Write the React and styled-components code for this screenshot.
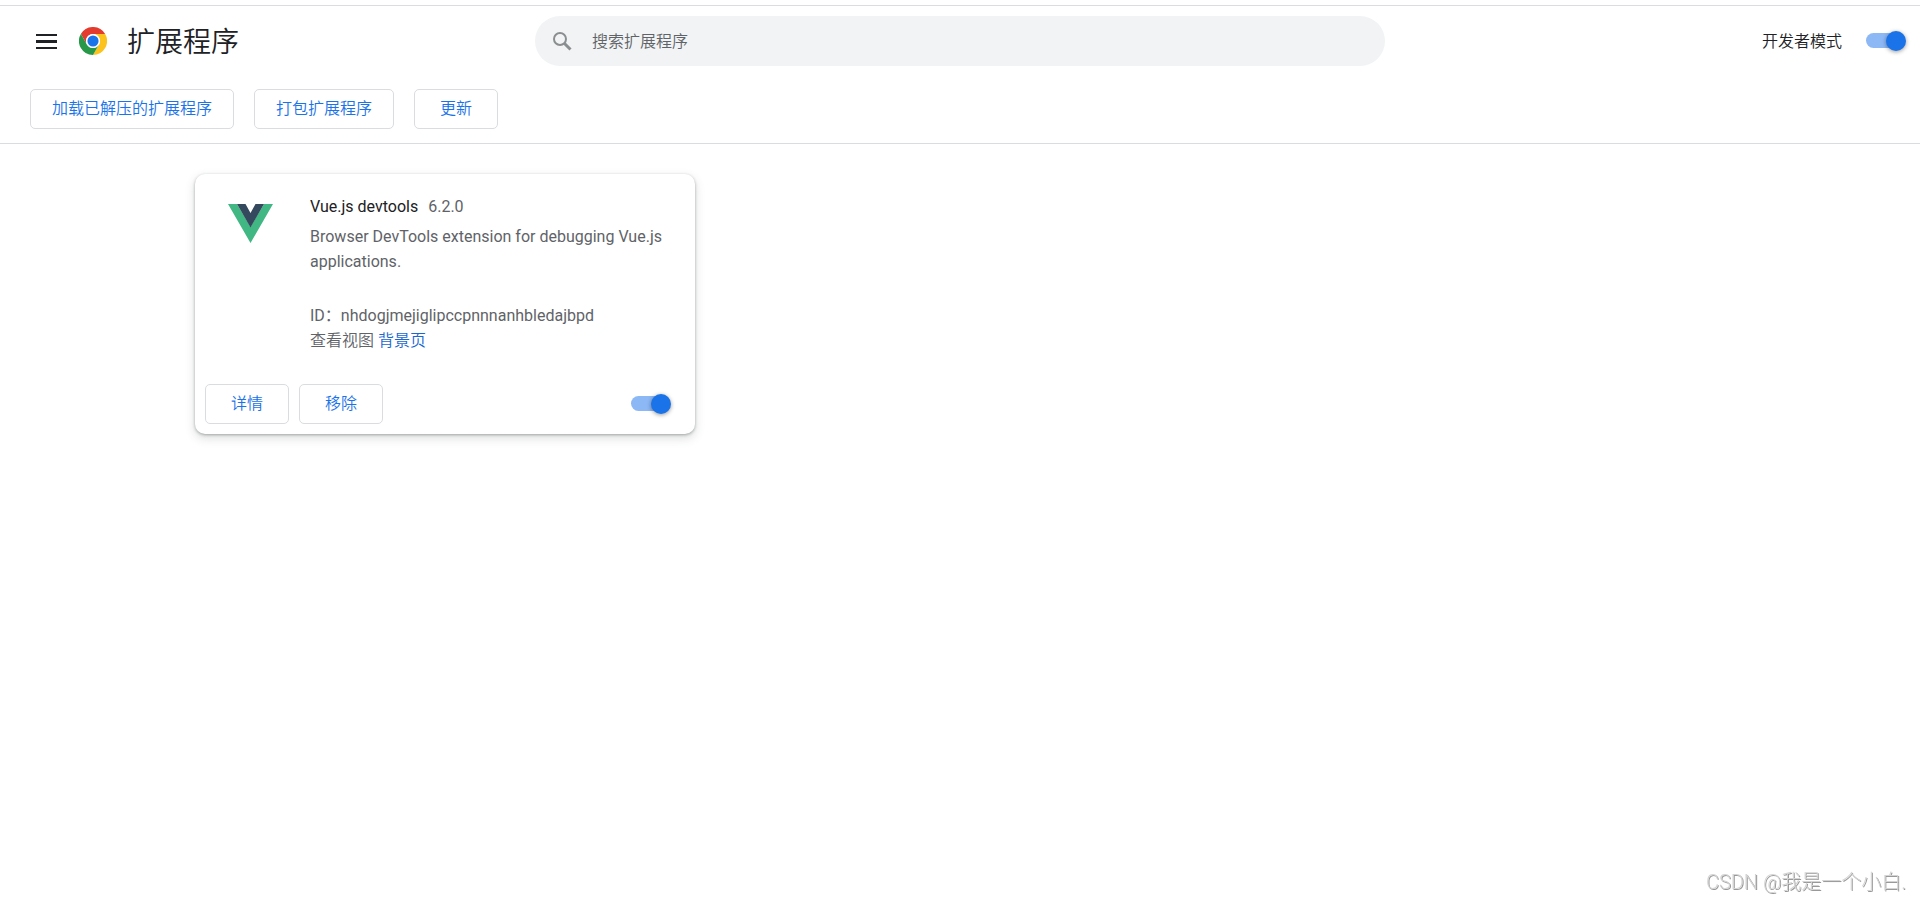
import React from "react";
import styled, { createGlobalStyle } from "styled-components";

const GlobalStyle = createGlobalStyle`
  *, *::before, *::after { box-sizing: border-box; }
  body {
    margin: 0;
    background: #fff;
    color: #202124;
    font: 350 16px/25px Roboto, "Noto Sans CJK SC", sans-serif;
  }
  button, input { font: inherit; }
`;

const Page = styled.div`
  padding-top: 5px;
`;

const Header = styled.header`
  display: grid;
  grid-template-columns: minmax(max-content, 1fr) minmax(0, 850px) minmax(max-content, 1fr);
  align-items: center;
  height: 71px;
  border-top: 1px solid #dadce0;
`;

const Brand = styled.div`
  display: flex;
  align-items: center;
  padding-left: 31px;
`;

const MenuButton = styled.button`
  display: flex;
  padding: 0;
  border: 0;
  background: none;
  color: #202124;
  cursor: pointer;
`;

const Logo = styled.svg`
  width: 28px;
  height: 28px;
  margin: 0 20px 0 17px;
`;

const Title = styled.h1`
  margin: 0;
  padding-top: 4px;
  font-size: 28px;
  line-height: 40px;
  font-weight: 350;
`;

const SearchBox = styled.label`
  display: flex;
  align-items: center;
  gap: 18px;
  height: 50px;
  padding: 0 16px;
  border-radius: 25px;
  background: #f1f3f4;
  color: #8b8e91;
`;

const SearchInput = styled.input`
  flex: 1;
  min-width: 0;
  padding: 0;
  border: 0;
  outline: 0;
  background: none;
  color: #202124;
  &::placeholder { color: #5f6368; opacity: 1; }
`;

const DevMode = styled.label`
  display: flex;
  align-items: center;
  justify-self: end;
  gap: 24px;
  padding-right: 14px;
`;

const Toggle = styled.input.attrs({ type: "checkbox", role: "switch" })`
  appearance: none;
  position: relative;
  width: 40px;
  height: 20px;
  margin: 0;
  cursor: pointer;

  &::before {
    content: "";
    position: absolute;
    inset: 2px 5px 3px 0;
    border-radius: 8px;
    background: #bdc1c6;
  }
  &::after {
    content: "";
    position: absolute;
    top: 0;
    left: 0;
    width: 20px;
    height: 20px;
    border-radius: 50%;
    background: #fff;
    box-shadow: 0 1px 4px rgba(0, 0, 0, 0.4);
  }
  &:checked::before { background: #8cb8f5; }
  &:checked::after { left: 20px; background: #1a73e8; }
`;

const Toolbar = styled.div`
  display: flex;
  gap: 20px;
  padding: 13px 30px 14px;
  border-bottom: 1px solid #dadce0;
`;

const Button = styled.button`
  min-width: 84px;
  height: 40px;
  padding: 0 21px;
  border: 1px solid #dadce0;
  border-radius: 5px;
  background: #fff;
  color: #1a73e8;
  line-height: 24px;
  cursor: pointer;
`;

const CardGrid = styled.main`
  display: grid;
  grid-template-columns: repeat(auto-fill, 500px);
  gap: 15px;
  max-width: 1530px;
  margin: 30px auto;
`;

const Card = styled.article`
  display: flex;
  flex-direction: column;
  min-height: 260px;
  border-radius: 10px;
  background: #fff;
  box-shadow: 0 1px 3px rgba(60, 64, 67, 0.4), 0 4px 10px 1px rgba(60, 64, 67, 0.15);
`;

const CardBody = styled.div`
  display: flex;
  flex: 1;
  gap: 37px;
  padding: 20px 25px 0 33px;
`;

const VueLogo = styled.svg`
  flex: none;
  width: 45px;
  height: 39px;
  margin-top: 10px;
`;

const Info = styled.div`
  font-weight: 400;
  color: #5f6368;
`;

const NameRow = styled.div`
  display: flex;
  gap: 10px;
  margin-bottom: 5px;
`;

const Name = styled.h2`
  margin: 0;
  font-size: 16px;
  font-weight: 400;
  color: #202124;
`;

const Text = styled.p`
  margin: 0;
`;

const Details = styled.div`
  margin-top: 29px;
`;

const Chinese = styled.span`
  font-weight: 350;
`;

const Link = styled.a`
  font-weight: 350;
  color: #1967d2;
  text-decoration: none;
`;

const CardActions = styled.div`
  display: flex;
  align-items: center;
  gap: 10px;
  padding: 0 24px 10px 10px;

  ${Toggle} { margin-left: auto; }
`;

const Watermark = styled.div`
  position: fixed;
  right: 14px;
  bottom: 5px;
  font-size: 20px;
  font-weight: 300;
  line-height: 30px;
  color: #d4d4d4;
  text-shadow: 1px 1px 0 #999;
`;

export default function App() {
  return (
    <Page>
      <GlobalStyle />
      <Header>
        <Brand>
          <MenuButton aria-label="主菜单">
            <svg width="31" height="30" viewBox="0 0 31 30" fill="currentColor">
              <path d="M5 8h21v2H5zM5 14h21v3H5zM5 21h21v2H5z" />
            </svg>
          </MenuButton>
          <Logo viewBox="0 0 48 48" aria-hidden="true">
            <path fill="#e33b2e" d="M3.2 12A24 24 0 0 1 44.8 12H24A12 12 0 0 0 13.6 30Z" />
            <path fill="#fcc31e" d="M44.8 12A24 24 0 0 1 24 48L34.4 30A12 12 0 0 0 24 12Z" />
            <path fill="#269847" d="M24 48A24 24 0 0 1 3.2 12L13.6 30A12 12 0 0 0 34.4 30Z" />
            <circle cx="24" cy="24" r="12" fill="#fff" />
            <circle cx="24" cy="24" r="9.5" fill="#1a73e8" />
          </Logo>
          <Title>扩展程序</Title>
        </Brand>
        <SearchBox>
          <svg width="23" height="23" viewBox="0 0 23 23" fill="none" stroke="currentColor" strokeWidth="2">
            <circle cx="9" cy="9" r="6" />
            <path strokeWidth="3" d="M13.5 13.5l6 6" />
          </svg>
          <SearchInput placeholder="搜索扩展程序" aria-label="搜索扩展程序" />
        </SearchBox>
        <DevMode>
          开发者模式
          <Toggle defaultChecked />
        </DevMode>
      </Header>
      <Toolbar>
        <Button>加载已解压的扩展程序</Button>
        <Button>打包扩展程序</Button>
        <Button>更新</Button>
      </Toolbar>
      <CardGrid>
        <Card>
          <CardBody>
            <VueLogo viewBox="0 0 45 39" aria-hidden="true">
              <path fill="#41b883" d="M0 0h9l13.500 23L36 0h9L22.500 39z" />
              <path fill="#35495e" d="M9 0h8.500l5 9 5-9H36L22.500 23.500z" />
            </VueLogo>
            <Info>
              <NameRow>
                <Name>Vue.js devtools</Name>
                <span>6.2.0</span>
              </NameRow>
              <Text>Browser DevTools extension for debugging Vue.js applications.</Text>
              <Details>
                <Text>ID：nhdogjmejiglipccpnnnanhbledajbpd</Text>
                <Text>
                  <Chinese>查看视图</Chinese> <Link href="#background">背景页</Link>
                </Text>
              </Details>
            </Info>
          </CardBody>
          <CardActions>
            <Button>详情</Button>
            <Button>移除</Button>
            <Toggle defaultChecked aria-label="Vue.js devtools" />
          </CardActions>
        </Card>
      </CardGrid>
      <Watermark>CSDN @我是一个小白.</Watermark>
    </Page>
  );
}
